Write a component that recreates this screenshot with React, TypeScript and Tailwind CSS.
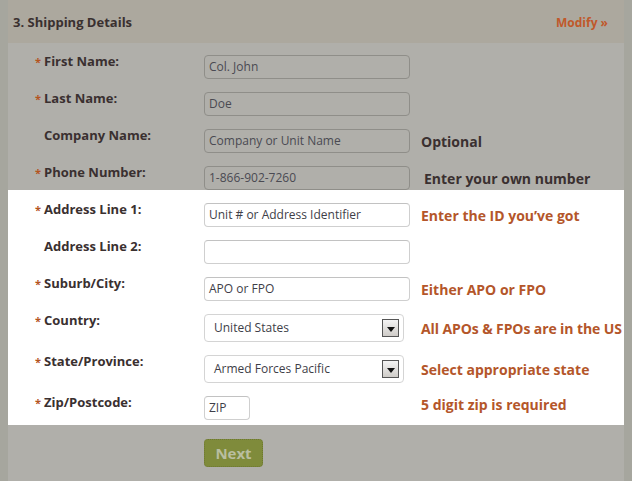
import React from "react";

const font = { fontFamily: '"Open Sans", "Liberation Sans", sans-serif' };

function Label({ text, req }: { text: string; req?: boolean }) {
  return (
    <div className="w-[173px] flex items-start pl-[4px] -mt-[1px] text-[13px] leading-[15px] font-bold text-[#3a3030]">
      <span className="w-[9px] text-[#b4541f] text-[11px] leading-[15px]">{req ? "*" : ""}</span>
      <span>{text}</span>
    </div>
  );
}

function TextInput({ value, w = "w-[206px]", dim }: { value: string; w?: string; dim?: boolean }) {
  return (
    <div
      className={`${w} h-[24px] rounded-[4px] border flex items-center px-[4px] text-[12px] ${
        dim ? "border-[#8f8e89] text-[#4a4a52]" : "border-[#cfcfcf] border-t-[#c2c2c2] border-t-dotted text-[#3e3e48] bg-white"
      }`}
    >
      {value}
    </div>
  );
}

function Select({ value }: { value: string }) {
  return (
    <div className="w-[200px] h-[28px] rounded-[4px] border border-[#d4d4d4] flex items-center justify-between pl-[9px] pr-[4px] text-[12px] text-[#3e3e48] bg-white">
      <span>{value}</span>
      <div className="w-[17px] h-[18px] border border-[#555] bg-gradient-to-b from-[#f4f4f4] to-[#cfccc8] flex items-end justify-center pb-[4px]">
        <svg width="8" height="5" viewBox="0 0 8 5">
          <path d="M0 0H8L4 5Z" fill="#111" />
        </svg>
      </div>
    </div>
  );
}

function Row({
  label,
  req,
  children,
  hint,
  hintClass,
}: {
  label: string;
  req?: boolean;
  children: React.ReactNode;
  hint?: string;
  hintClass?: string;
}) {
  return (
    <div className="flex items-start">
      <Label text={label} req={req} />
      {children}
      {hint ? <div className={hintClass}>{hint}</div> : null}
    </div>
  );
}

export default function App() {
  const dimHint = "self-center whitespace-nowrap ml-[11px] text-[14px] font-bold text-[#3a3030]";
  const orange = "self-center whitespace-nowrap ml-[11px] text-[14px] font-bold text-[#b4562a]";
  return (
    <div className="w-[632px] h-[481px] bg-[#a6a69e] px-[8px] overflow-hidden" style={font}>
      <div className="h-[481px] bg-[#b0afaa] flex flex-col">
        <div className="h-[43px] bg-[#aca89e] flex items-center justify-between pl-[5px] pr-[16px] pt-[2px]">
          <span className="text-[13px] font-bold text-[#3a3030]">3. Shipping Details</span>
          <span className="text-[12px] font-bold text-[#c0582b]">Modify »</span>
        </div>
        <div className="pt-[12px] flex flex-col gap-[13px] pl-[23px]">
          <Row label="First Name:" req>
            <TextInput value="Col. John" dim />
          </Row>
          <Row label="Last Name:" req>
            <TextInput value="Doe" dim />
          </Row>
          <Row label="Company Name:" hint="Optional" hintClass={dimHint}>
            <TextInput value="Company or Unit Name" dim />
          </Row>
          <Row label="Phone Number:" req hint="Enter your own number" hintClass={dimHint + " ml-[14px] mt-[1px]"}>
            <TextInput value="1-866-902-7260" dim />
          </Row>
        </div>
        <div className="bg-white pt-[13px] pb-[5px] flex flex-col gap-[13px] pl-[23px]">
          <Row label="Address Line 1:" req hint="Enter the ID you’ve got" hintClass={orange}>
            <TextInput value="Unit # or Address Identifier" />
          </Row>
          <Row label="Address Line 2:">
            <TextInput value="" />
          </Row>
          <Row label="Suburb/City:" req hint="Either APO or FPO" hintClass={orange}>
            <TextInput value="APO or FPO" />
          </Row>
          <Row label="Country:" req hint="All APOs & FPOs are in the US" hintClass={orange + " ml-[17px] tracking-[-0.1px]"}>
            <Select value="United States" />
          </Row>
          <Row label="State/Province:" req hint="Select appropriate state" hintClass={orange + " ml-[17px]"}>
            <Select value="Armed Forces Pacific" />
          </Row>
          <Row label="Zip/Postcode:" req hint="5 digit zip is required" hintClass={orange + " ml-[171px] -mt-[8px]"}>
            <TextInput value="ZIP" w="w-[46px]" />
          </Row>
        </div>
        <div className="pt-[14px] pl-[196px]">
          <div className="w-[59px] h-[28px] rounded-[4px] bg-[#7f8b3b] border border-dotted border-[#6d7830] flex items-center justify-center text-[15px] font-bold text-[#b9bea0]">
            Next
          </div>
        </div>
      </div>
    </div>
  );
}
